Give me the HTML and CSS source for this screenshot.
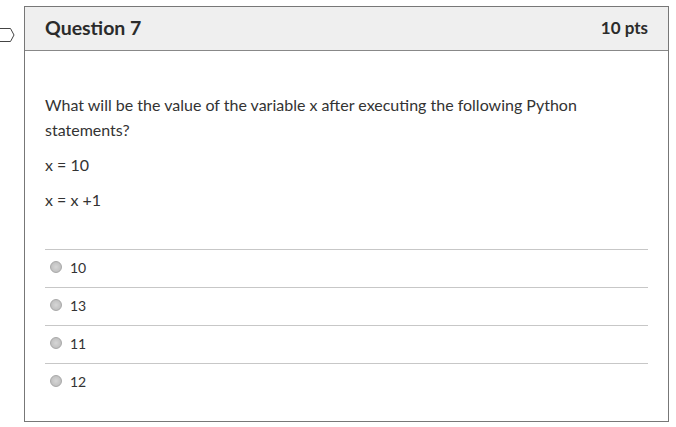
FILE: index.html
```html
<!DOCTYPE html>
<html>
<head>
<meta charset="utf-8">
<link rel="stylesheet" href="styles.css">
</head>
<body>
<div class="page">
  <div class="flag-col">
    <svg class="flag" width="16" height="16" viewBox="0 0 16 16">
      <path d="M-2 1.5 H10.5 L14 8 L10.5 14.5 H-2" fill="#fff" stroke="#444" stroke-width="1"/>
    </svg>
  </div>
  <div class="card">
    <div class="card-header">
      <span class="q-title">Question 7</span>
      <span class="q-pts">10 pts</span>
    </div>
    <div class="card-body">
      <p class="text">What will be the value of the variable x after executing the following Python statements?</p>
      <p class="code">x = 10</p>
      <p class="code">x = x +1</p>
      <div class="answers">
        <div class="answer"><span class="radio"></span><span class="label">10</span></div>
        <div class="answer"><span class="radio"></span><span class="label">13</span></div>
        <div class="answer"><span class="radio"></span><span class="label">11</span></div>
        <div class="answer"><span class="radio"></span><span class="label">12</span></div>
      </div>
    </div>
  </div>
</div>
</body>
</html>
```
FILE: styles.css
```css
html, body {
  margin: 0;
  padding: 0;
  background: #fff;
  font-family: Lato, "Liberation Sans", sans-serif;
  color: #333;
}
.page {
  display: flex;
  padding-top: 6px;
  width: 669px;
}
.flag-col {
  width: 24px;
  flex: none;
  padding-top: 21px;
}
.flag {
  display: block;
}
.card {
  flex: 1;
  border: 1px solid #777;
  height: 416px;
  box-sizing: border-box;
}
.card-header {
  background: #efefef;
  height: 44px;
  border-bottom: 1px solid #888;
  box-sizing: border-box;
  display: flex;
  align-items: center;
  justify-content: space-between;
  padding: 0 20px 2px 20px;
}
.q-title {
  font-size: 19.5px;
  font-weight: 700;
  color: #2b2b2b;
}
.q-pts {
  font-size: 17px;
  font-weight: 700;
  color: #2b2b2b;
}
.card-body {
  padding: 41px 20px 0 20px;
}
.text, .code {
  margin: 0 0 10px 0;
  font-size: 16px;
  line-height: 25px;
  color: #333;
}
.answers {
  margin-top: 37px;
}
.answer {
  border-top: 1px solid #c7c7c7;
  height: 38px;
  box-sizing: border-box;
  display: flex;
  align-items: center;
  padding-left: 5px;
  padding-bottom: 3px;
}
.radio {
  width: 12px;
  height: 12px;
  border-radius: 50%;
  border: 1px solid #a8a8a8;
  background: radial-gradient(circle at 50% 50%, #d6d6d6 0%, #c4c4c4 60%, #b5b5b5 100%);
  box-sizing: border-box;
  margin-right: 8px;
}
.label {
  font-size: 14px;
  color: #333;
}
```
